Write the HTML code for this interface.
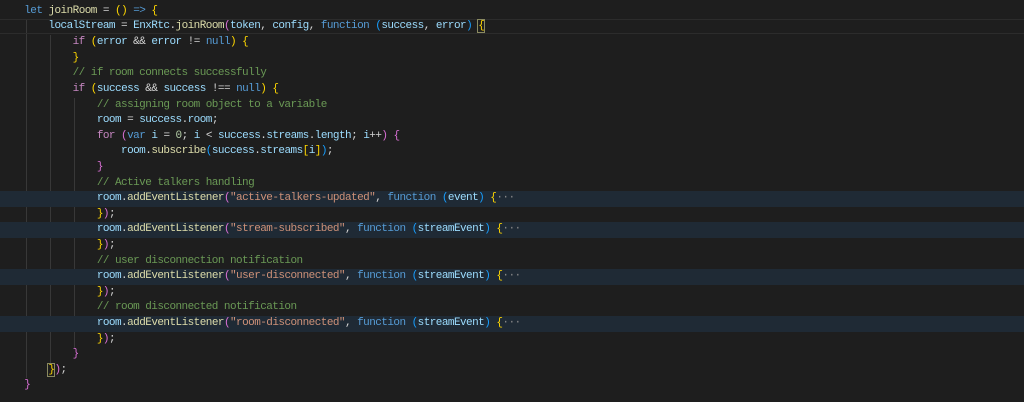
<!DOCTYPE html>
<html><head><style>
body{margin:0;width:1024px;height:402px;background:#1e1e1e;overflow:hidden;position:relative;font-family:"Liberation Mono",monospace;font-size:11px;letter-spacing:-0.55px;}
.l{position:absolute;left:0;width:1024px;height:15.6px;line-height:15.6px;white-space:pre;color:#d4d4d4;}
.hl{background:#1f2a35;}
.cur{border-top:1px solid #2c2c2c;border-bottom:1px solid #2c2c2c;box-sizing:border-box;line-height:13.6px;}
.g{position:absolute;width:1px;background:#383838;}
.k{color:#569cd6}.c{color:#c586c0}.v{color:#9cdcfe}.f{color:#dcdcaa}.s{color:#ce9178}.m{color:#6a9955}
.y{color:#ffd700}.p{color:#da70d6}.b{color:#179fff}
.e{color:#8a8a8a}
.box{outline:1px solid #8a8a60;}
</style></head><body>
<div class="g" style="left:26px;top:20px;height:358px"></div>
<div class="g" style="left:50px;top:35px;height:328px"></div>
<div class="g" style="left:74px;top:98px;height:250px"></div>
<div class="l" style="top:4px">    <span class="k">let</span> <span class="f">joinRoom</span> = <span class="y">()</span> <span class="k">=&gt;</span> <span class="y">{</span></div>
<div class="l cur" style="top:18.6px">        <span class="v">localStream</span> = <span class="v">EnxRtc</span>.<span class="f">joinRoom</span><span class="p">(</span><span class="v">token</span>, <span class="v">config</span>, <span class="k">function</span> <span class="b">(</span><span class="v">success</span>, <span class="v">error</span><span class="b">)</span> <span class="box" style="color:#ffd700">{</span></div>
<div class="l" style="top:35.2px">            <span class="c">if</span> <span class="y">(</span><span class="v">error</span> &amp;&amp; <span class="v">error</span> != <span class="k">null</span><span class="y">)</span> <span class="y">{</span></div>
<div class="l" style="top:50.8px">            <span class="y">}</span></div>
<div class="l" style="top:66.4px">            <span class="m">// if room connects successfully</span></div>
<div class="l" style="top:82px">            <span class="c">if</span> <span class="y">(</span><span class="v">success</span> &amp;&amp; <span class="v">success</span> !== <span class="k">null</span><span class="y">)</span> <span class="y">{</span></div>
<div class="l" style="top:97.6px">                <span class="m">// assigning room object to a variable</span></div>
<div class="l" style="top:113.2px">                <span class="v">room</span> = <span class="v">success</span>.<span class="v">room</span>;</div>
<div class="l" style="top:128.8px">                <span class="c">for</span> <span class="p">(</span><span class="k">var</span> <span class="v">i</span> = <span style="color:#b5cea8">0</span>; <span class="v">i</span> &lt; <span class="v">success</span>.<span class="v">streams</span>.<span class="v">length</span>; <span class="v">i</span>++<span class="p">)</span> <span class="p">{</span></div>
<div class="l" style="top:144.4px">                    <span class="v">room</span>.<span class="f">subscribe</span><span class="b">(</span><span class="v">success</span>.<span class="v">streams</span><span class="y">[</span><span class="v">i</span><span class="y">]</span><span class="b">)</span>;</div>
<div class="l" style="top:160px">                <span class="p">}</span></div>
<div class="l" style="top:175.6px">                <span class="m">// Active talkers handling</span></div>
<div class="l hl" style="top:191.2px">                <span class="v">room</span>.<span class="f">addEventListener</span><span class="p">(</span><span class="s">"active-talkers-updated"</span>, <span class="k">function</span> <span class="b">(</span><span class="v">event</span><span class="b">)</span> <span class="y">{</span><span class="e">···</span></div>
<div class="l" style="top:206.8px">                <span class="y">}</span><span class="p">)</span>;</div>
<div class="l hl" style="top:222.4px">                <span class="v">room</span>.<span class="f">addEventListener</span><span class="p">(</span><span class="s">"stream-subscribed"</span>, <span class="k">function</span> <span class="b">(</span><span class="v">streamEvent</span><span class="b">)</span> <span class="y">{</span><span class="e">···</span></div>
<div class="l" style="top:238px">                <span class="y">}</span><span class="p">)</span>;</div>
<div class="l" style="top:253.6px">                <span class="m">// user disconnection notification</span></div>
<div class="l hl" style="top:269.2px">                <span class="v">room</span>.<span class="f">addEventListener</span><span class="p">(</span><span class="s">"user-disconnected"</span>, <span class="k">function</span> <span class="b">(</span><span class="v">streamEvent</span><span class="b">)</span> <span class="y">{</span><span class="e">···</span></div>
<div class="l" style="top:284.8px">                <span class="y">}</span><span class="p">)</span>;</div>
<div class="l" style="top:300.4px">                <span class="m">// room disconnected notification</span></div>
<div class="l hl" style="top:316px">                <span class="v">room</span>.<span class="f">addEventListener</span><span class="p">(</span><span class="s">"room-disconnected"</span>, <span class="k">function</span> <span class="b">(</span><span class="v">streamEvent</span><span class="b">)</span> <span class="y">{</span><span class="e">···</span></div>
<div class="l" style="top:331.6px">                <span class="y">}</span><span class="p">)</span>;</div>
<div class="l" style="top:347.2px">            <span class="p">}</span></div>
<div class="l" style="top:362.8px">        <span class="y box">}</span><span class="p">)</span>;</div>
<div class="l" style="top:378.4px">    <span class="p">}</span></div>
</body></html>
